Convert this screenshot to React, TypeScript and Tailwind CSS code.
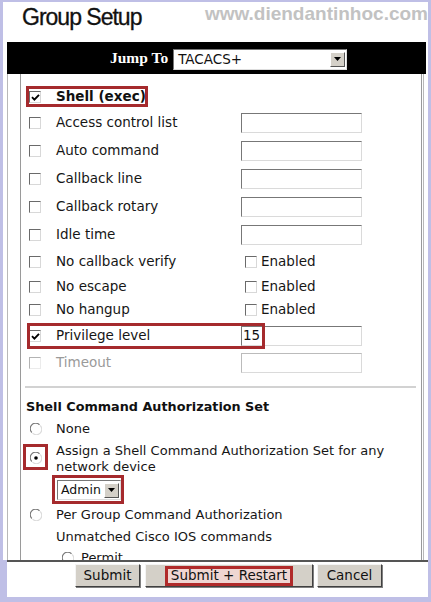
import React from "react";

const F = "font-['DejaVu_Sans',Verdana,sans-serif]";

function Check({ checked = false, disabled = false }: { checked?: boolean; disabled?: boolean }) {
  return (
    <span
      className={`relative inline-block w-[12px] h-[12px] bg-white border border-t-[#6a6a6a] border-l-[#6a6a6a] border-b-[#d8d8d8] border-r-[#d8d8d8] ${disabled ? "opacity-50" : ""}`}
    >
      {checked && (
        <svg className="absolute left-[1px] top-[1px]" width="9" height="9" viewBox="0 0 9 9">
          <path d="M1 4.2 L3.4 6.6 L8 1.8" fill="none" stroke="#000" strokeWidth="1.9" />
        </svg>
      )}
    </span>
  );
}

function Radio({ checked = false }: { checked?: boolean }) {
  return (
    <svg width="12" height="12" viewBox="0 0 12 12" className="block">
      <circle cx="6" cy="6" r="5.5" fill="#fff" />
      <path d="M1.8 9.5 A5 5 0 0 1 9.5 1.8" fill="none" stroke="#7a7a7a" strokeWidth="1.2" />
      <path d="M10.2 2.5 A5 5 0 0 1 2.5 10.2" fill="none" stroke="#dcdcdc" strokeWidth="1.2" />
      {checked && <circle cx="6" cy="6" r="1.8" fill="#000" />}
    </svg>
  );
}

function TextBox({ value = "", disabled = false }: { value?: string; disabled?: boolean }) {
  return (
    <div
      className={`w-[121px] h-[20px] bg-white border border-t-[#777] border-l-[#777] border-b-[#dadada] border-r-[#dadada] flex items-center pl-[1px] text-[13.5px] text-[#111] ${disabled ? "border-t-[#bbb] border-l-[#bbb]" : ""}`}
    >
      {value}
    </div>
  );
}

function Arrow() {
  return (
    <span className="w-[15px] h-[15px] bg-[#d4d0c8] border border-t-white border-l-white border-b-[#555] border-r-[#555] flex items-center justify-center">
      <svg width="7" height="4" viewBox="0 0 7 4">
        <path d="M0 0 H7 L3.5 4 Z" fill="#000" />
      </svg>
    </span>
  );
}

type RowProps = {
  h: number;
  label: string;
  checked?: boolean;
  right?: "input" | "enabled" | "none";
  value?: string;
  disabled?: boolean;
};

function Row({ h, label, checked, right = "input", value, disabled }: RowProps) {
  return (
    <div className="flex items-center pl-[8px]" style={{ height: h }}>
      <div className="w-[27px] flex items-center">
        <Check checked={checked} disabled={disabled} />
      </div>
      <div className={`w-[185px] text-[13.5px] leading-none ${disabled ? "text-[#9a9a9a]" : "text-[#161616]"}`}>
        {label}
      </div>
      {right === "input" && <TextBox value={value} disabled={disabled} />}
      {right === "enabled" && (
        <div className="flex items-center pl-[4px] gap-[4px] text-[13.5px] leading-none text-[#161616]">
          <Check />
          <span>Enabled</span>
        </div>
      )}
    </div>
  );
}

function Btn({ w, children }: { w: number; children: React.ReactNode }) {
  return (
    <div
      className="h-[23px] bg-[#d4d0c8] border border-t-[#f4f4f4] border-l-[#f4f4f4] border-b-[#404040] border-r-[#404040] shadow-[1px_1px_0_#808080] flex items-center justify-center text-[13.5px] text-[#111]"
      style={{ width: w }}
    >
      {children}
    </div>
  );
}

export default function App() {
  return (
    <div className={`w-[431px] h-[602px] bg-[#bfbfe6] pt-[2px] pl-[3px] pr-[3px] pb-[5px] overflow-hidden flex flex-col ${F}`}>
      {/* header */}
      <div className="h-[40px] bg-white flex shrink-0">
        <div className="pl-[19px] pt-[2px] text-[23px] leading-[27px] text-[#111] font-['Liberation_Sans',Arial,sans-serif] tracking-[-1px] [-webkit-text-stroke:0.3px_#111]">
          Group Setup
        </div>
        <div className="ml-auto pt-[1px] text-[19px] leading-[22px] font-bold text-[#c2c2c2] font-['Liberation_Sans',Arial,sans-serif]">
          www.diendantinhoc.com
        </div>
      </div>
      {/* black bar */}
      <div className="h-[32px] bg-white shrink-0 flex">
        <div className="ml-[4px] mr-[2px] flex-1 bg-black flex items-center pl-[103px]">
          <span className="font-['Liberation_Serif','Times_New_Roman',serif] font-bold text-white text-[15.5px] mr-[5px]">
            Jump To
          </span>
          <div className="w-[174px] h-[21px] mt-[2px] bg-white border border-t-[#777] border-l-[#777] border-b-[#ddd] border-r-[#ddd] flex items-center justify-between pl-[4px] pr-[1px] text-[13.5px] text-[#111]">
            <span>TACACS+</span>
            <Arrow />
          </div>
        </div>
      </div>
      {/* content */}
      <div className="h-[486px] bg-white shrink-0 flex">
        <div className="ml-[4px] w-[417px] border-l border-r border-[#b8b8b8] flex">
          <div className="relative ml-[12px] mr-[1px] flex-1 border-l border-r border-[#9a9a9a] overflow-hidden">
            <div className="flex flex-col pt-[10px]">
              <div className="flex items-center pl-[8px] h-[25px]">
                <div className="w-[27px] flex items-center">
                  <Check checked />
                </div>
                <div className="text-[13.5px] leading-none font-bold text-[#111]">Shell (exec)</div>
              </div>
              <Row h={28} label="Access control list" />
              <Row h={28} label="Auto command" />
              <Row h={28} label="Callback line" />
              <Row h={28} label="Callback rotary" />
              <Row h={28} label="Idle time" />
              <Row h={26} label="No callback verify" right="enabled" />
              <Row h={23} label="No escape" right="enabled" />
              <Row h={24} label="No hangup" right="enabled" />
              <Row h={27} label="Privilege level" checked value="15" />
              <Row h={28} label="Timeout" disabled />

              <div className="mt-[9px] ml-[4px] w-[391px] h-[2px] bg-[#d2d2d2]" />

              <div className="mt-[10px] h-[18px] pl-[5px] flex items-center text-[12.8px] font-bold text-[#111]">
                Shell Command Authorization Set
              </div>

              <div className="mt-[4px] h-[18px] flex items-center pl-[9px]">
                <div className="w-[26px]"><Radio /></div>
                <span className="text-[13px] text-[#161616]">None</span>
              </div>

              <div className="mt-[5px] flex pl-[9px]">
                <div className="w-[26px] pt-[9px]"><Radio checked /></div>
                <div className="text-[13px] leading-[16px] text-[#161616]">
                  Assign a Shell Command Authorization Set for any
                  <br />
                  network device
                </div>
              </div>

              <div className="mt-[5px] pl-[36px] flex">
                <div className="w-[64px] h-[20px] bg-white border border-t-[#777] border-l-[#777] border-b-[#ddd] border-r-[#ddd] flex items-center justify-between pl-[3px] pr-[1px] text-[12.5px] text-[#111]">
                  <span>Admin</span>
                  <Arrow />
                </div>
              </div>

              <div className="mt-[6px] h-[18px] flex items-center pl-[9px]">
                <div className="w-[26px]"><Radio /></div>
                <span className="text-[13px] text-[#161616]">Per Group Command Authorization</span>
              </div>

              <div className="mt-[4px] h-[18px] flex items-center pl-[35px] text-[13px] text-[#161616]">
                Unmatched Cisco IOS commands
              </div>

              <div className="mt-[3px] h-[18px] flex items-center pl-[41px]">
                <div className="w-[19px]"><Radio /></div>
                <span className="text-[13px] text-[#161616]">Permit</span>
              </div>
            </div>

            {/* red highlight boxes */}
            <div className="absolute left-[5px] top-[12px] w-[122px] h-[21px] border-[3px] border-[#a52a2d]" />
            <div className="absolute left-[6px] top-[249px] w-[238px] h-[26px] border-[3px] border-[#a52a2d]" />
            <div className="absolute left-[2px] top-[370px] w-[25px] h-[26px] border-[3px] border-[#a52a2d]" />
            <div className="absolute left-[31px] top-[401px] w-[72px] h-[29px] border-[3px] border-[#a52a2d]" />
          </div>
        </div>
      </div>
      {/* button bar */}
      <div className="h-[37px] shrink-0 pl-[4px]">
        <div className="h-full bg-white border-t-2 border-[#555] flex items-start pt-[2px] pl-[68px]">
          <Btn w={65}>Submit</Btn>
          <div className="ml-[5px]">
            <Btn w={168}>
              <span className="border-[3px] border-[#b02a2a] h-[20px] px-[3px] flex items-center bg-[#efd6d2]">
                Submit + Restart
              </span>
            </Btn>
          </div>
          <div className="ml-[4px]">
            <Btn w={65}>Cancel</Btn>
          </div>
        </div>
      </div>
    </div>
  );
}
